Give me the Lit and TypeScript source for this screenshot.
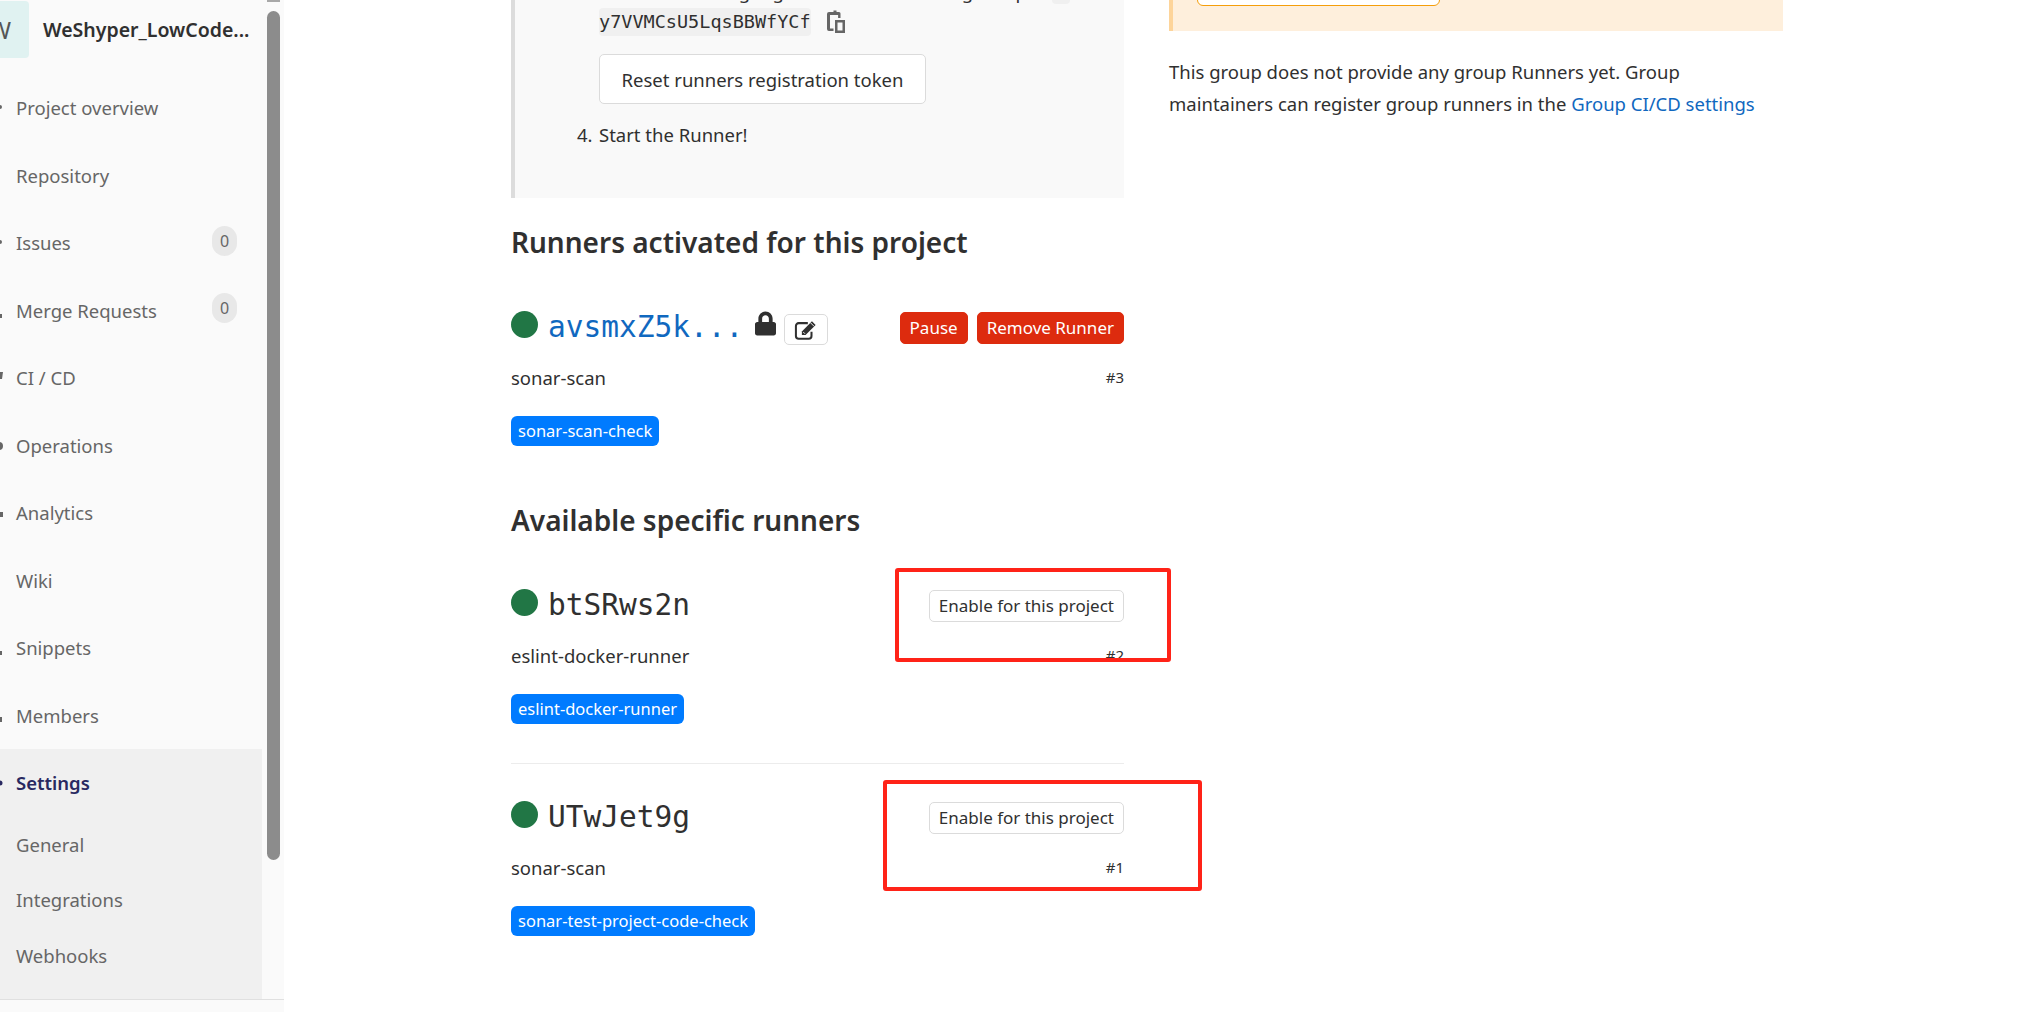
import { LitElement, html, css, svg } from "lit";
import { customElement } from "lit/decorators.js";

// --- Data ---

interface NavItem {
  label: string;
  count?: number;
  // sliver of the icon that is left visible at the clipped sidebar edge
  sliver: ReturnType<typeof svg>;
}

const NAV_ITEMS: NavItem[] = [
  { label: "Project overview", sliver: svg`<circle cx="0" cy="8" r="2" />` },
  { label: "Repository", sliver: svg`` },
  { label: "Issues", count: 0, sliver: svg`<circle cx="0" cy="8" r="2" />` },
  { label: "Merge Requests", count: 0, sliver: svg`<rect x="0" y="13" width="2" height="4" />` },
  { label: "CI / CD", sliver: svg`<path d="M0 3h3l-1 7H0z" />` },
  { label: "Operations", sliver: svg`<circle cx="-1" cy="10" r="4" />` },
  { label: "Analytics", sliver: svg`<path d="M0 8h3v5H0z" />` },
  { label: "Wiki", sliver: svg`` },
  { label: "Snippets", sliver: svg`<rect x="0" y="12" width="2" height="4" />` },
  { label: "Members", sliver: svg`<rect x="0" y="11" width="2" height="5" />` },
];

const SUB_ITEMS = ["General", "Integrations", "Webhooks"];

// --- Icons ---

const LOCK_ICON = html`<svg class="lock" viewBox="0 0 448 512" aria-hidden="true">
  <path
    d="M400 224h-24v-72C376 68.2 307.8 0 224 0S72 68.2 72 152v72H48c-26.5 0-48 21.5-48 48v192c0 26.5 21.5 48 48 48h352c26.5 0 48-21.5 48-48V272c0-26.5-21.5-48-48-48zm-104 0H152v-72c0-39.7 32.3-72 72-72s72 32.3 72 72v72z"
  />
</svg>`;

const EDIT_ICON = html`<svg class="edit" viewBox="0 0 26 24" aria-hidden="true">
  <path
    d="M19 14v4.5a3 3 0 0 1-3 3H5a3 3 0 0 1-3-3V7.5a3 3 0 0 1 3-3h10"
    fill="none"
    stroke="currentColor"
    stroke-width="2.2"
  />
  <path d="M8.5 13.5 19.5 2.5l4 4-11 11H8.5z" fill="currentColor" />
  <path d="M18 4.2l3.8 3.8" stroke="#fff" stroke-width="1" />
  <path d="M10 14.2l1.9 1.9" stroke="#fff" stroke-width="1" />
</svg>`;

const COPY_ICON = html`<svg class="copy" viewBox="0 0 18 24" aria-hidden="true">
  <path d="M6.5 3V1.5h3V3h2.5a1.5 1.5 0 0 1 1.5 1.5V9h-2.4V6H3v13.5h3.5V22H2a2 2 0 0 1-2-2V5a2 2 0 0 1 2-2z" />
  <path d="M8 11h10v13H8zM10.5 13.5v8h5v-8z" fill-rule="evenodd" />
</svg>`;

// --- Sidebar ---

@customElement("app-sidebar")
export class AppSidebar extends LitElement {
  static styles = css`
    :host {
      display: flex;
      flex-direction: column;
      position: relative;
      flex: none;
      width: 284px;
      height: 1012px;
      background: #fafafa;
      font-family: "Noto Sans", sans-serif;
      font-size: 18.5px;
      color: #666;
      overflow: hidden;
    }
    .head {
      display: flex;
      align-items: flex-start;
      gap: 14px;
      height: 74px;
      padding-top: 1px;
      box-sizing: border-box;
    }
    .avatar {
      flex: none;
      width: 58px;
      height: 57px;
      margin-left: -29px;
      border-radius: 4px;
      background: #e0f2f1;
      color: #555;
      font-size: 24px;
      line-height: 57px;
      text-align: center;
    }
    .title {
      font-size: 19.5px;
      font-weight: 600;
      color: #303030;
      line-height: 58px;
      white-space: nowrap;
    }
    nav {
      width: 262px;
      height: 926px;
      display: flex;
      flex-direction: column;
    }
    .item {
      display: flex;
      align-items: center;
      height: 67.5px;
      flex: none;
      padding-right: 25px;
    }
    .sliver {
      flex: none;
      width: 16px;
      height: 18px;
      fill: #666;
    }
    .label {
      flex: 1;
    }
    .count {
      width: 25px;
      height: 30px;
      margin-top: -4px;
      border-radius: 13px;
      background: #e8e8e8;
      color: #666;
      font-size: 16px;
      line-height: 30px;
      text-align: center;
    }
    .active {
      flex: 1;
      background: #f0f0f0;
    }
    .active .item {
      color: #292961;
      font-weight: 600;
    }
    .active .sliver {
      fill: #292961;
    }
    .sub {
      display: flex;
      align-items: center;
      height: 55.5px;
      padding-left: 16px;
    }
    .foot {
      height: 12px;
      border-top: 1px solid #e0e0e0;
    }
    .thumb {
      position: absolute;
      left: 267px;
      top: 11px;
      width: 13px;
      height: 349px;
      height: 849px;
      border-radius: 7px;
      background: #8c8c8c;
    }
    .thumb-top {
      position: absolute;
      left: 267px;
      top: 0;
      width: 13px;
      height: 2px;
      background: #a8a8a8;
    }
  `;

  private renderSliver(item: NavItem) {
    return html`<svg class="sliver" viewBox="0 0 16 18" aria-hidden="true">${item.sliver}</svg>`;
  }

  render() {
    return html`
      <div class="head">
        <div class="avatar">W</div>
        <div class="title">WeShyper_LowCode...</div>
      </div>
      <nav>
        ${NAV_ITEMS.map(
          (item) => html`
            <div class="item">
              ${this.renderSliver(item)}
              <span class="label">${item.label}</span>
              ${item.count !== undefined ? html`<span class="count">${item.count}</span>` : ""}
            </div>
          `,
        )}
        <div class="active">
          <div class="item">
            <svg class="sliver" viewBox="0 0 16 18" aria-hidden="true"><circle cx="0" cy="9" r="2.5" /></svg>
            <span class="label">Settings</span>
          </div>
          ${SUB_ITEMS.map((label) => html`<div class="sub">${label}</div>`)}
        </div>
      </nav>
      <div class="foot"></div>
      <div class="thumb-top"></div>
      <div class="thumb"></div>
    `;
  }
}

// --- Runner card ---

@customElement("runner-card")
export class RunnerCard extends LitElement {
  static properties = {
    name: {},
    description: {},
    tag: {},
    runnerId: {},
    linked: { type: Boolean },
    mark: {},
    divided: { type: Boolean },
  };

  name = "";
  description = "";
  tag = "";
  runnerId = 0;
  linked = false;
  mark = "";
  divided = false;

  static styles = css`
    :host {
      display: block;
      position: relative;
      padding: 39px 0;
    }
    :host([divided]) {
      border-top: 1px solid #ececec;
      padding-top: 38px;
    }
    .top {
      display: flex;
      justify-content: space-between;
      align-items: flex-start;
      height: 32px;
    }
    .title {
      display: flex;
      align-items: flex-start;
      height: 32px;
    }
    .dot {
      flex: none;
      width: 27px;
      height: 27px;
      margin-top: -1px;
      border-radius: 50%;
      background: #217645;
    }
    .name {
      margin-left: 10px;
      font-family: "DejaVu Sans Mono", monospace;
      font-size: 29.5px;
      line-height: 30px;
      color: #303030;
    }
    .name.link {
      color: #1068bf;
    }
    .lock {
      width: 21px;
      height: 25px;
      margin: -1px 0 0 12px;
      fill: #303030;
    }
    .edit-btn {
      display: flex;
      align-items: center;
      justify-content: center;
      width: 44px;
      height: 31px;
      margin: 2px 0 0 8px;
      box-sizing: border-box;
      border: 1px solid #dbdbdb;
      border-radius: 5px;
      background: #fff;
      color: #303030;
    }
    .edit {
      width: 26px;
      height: 22px;
    }
    .actions {
      display: flex;
      gap: 9px;
    }
    button {
      height: 32px;
      padding: 0 9px;
      box-sizing: border-box;
      border: 1px solid #dbdbdb;
      border-radius: 5px;
      background: #fff;
      color: #303030;
      font-family: "Noto Sans", sans-serif;
      font-size: 17px;
      line-height: 28px;
      white-space: nowrap;
    }
    button.danger {
      border-color: #dd2b0e;
      background: #dd2b0e;
      color: #fff;
    }
    .info {
      display: flex;
      justify-content: space-between;
      align-items: center;
      height: 28px;
      margin-top: 19px;
    }
    .id {
      font-size: 15px;
    }
    .tag {
      display: inline-block;
      height: 30px;
      margin-top: 25px;
      padding: 0 7px;
      border-radius: 6px;
      background: #007bff;
      color: #fff;
      font-size: 16.5px;
      line-height: 30px;
      vertical-align: top;
    }
    .mark {
      position: absolute;
      box-sizing: border-box;
      border: 4px solid #ff2318;
      border-radius: 3px;
    }
    .mark-a {
      left: 384px;
      top: 17px;
      width: 276px;
      height: 94px;
    }
    .mark-b {
      left: 372px;
      top: 16px;
      width: 319px;
      height: 111px;
    }
  `;

  render() {
    return html`
      <div class="top">
        <div class="title">
          <span class="dot"></span>
          <span class="name ${this.linked ? "link" : ""}">${this.name}</span>
          ${this.linked ? html`${LOCK_ICON}<span class="edit-btn">${EDIT_ICON}</span>` : ""}
        </div>
        <div class="actions">
          ${this.linked
            ? html`<button class="danger">Pause</button><button class="danger">Remove Runner</button>`
            : html`<button>Enable for this project</button>`}
        </div>
      </div>
      <div class="info">
        <span>${this.description}</span>
        <span class="id">#${this.runnerId}</span>
      </div>
      <span class="tag">${this.tag}</span>
      ${this.mark ? html`<div class="mark mark-${this.mark}"></div>` : ""}
    `;
  }
}

// --- Page ---

@customElement("app-root")
export class AppRoot extends LitElement {
  static styles = css`
    :host {
      display: flex;
      width: 2023px;
      height: 1012px;
      overflow: hidden;
      background: #fff;
      color: #303030;
      font-family: "Noto Sans", sans-serif;
      font-size: 18.5px;
    }
    main {
      display: flex;
      gap: 45px;
      align-items: flex-start;
      padding-left: 227px;
    }
    .left {
      width: 613px;
      flex: none;
      margin-top: -24px;
    }
    .right {
      width: 614px;
      flex: none;
      margin-top: -24px;
    }
    .steps {
      height: 222px;
      box-sizing: border-box;
      border-left: 4px solid #dcdcdc;
      background: #f9f9f9;
      padding-left: 84px;
    }
    .line {
      height: 32px;
      line-height: 32px;
      white-space: nowrap;
    }
    .chip-empty {
      display: inline-block;
      width: 18px;
      height: 28px;
      vertical-align: top;
      margin-left: 20px;
      border-radius: 4px;
      background: #f0f0f0;
    }
    .token {
      display: flex;
      align-items: flex-start;
      height: 46px;
    }
    code {
      height: 28px;
      padding: 0 0;
      border-radius: 4px;
      background: #f0f0f0;
      font-family: "DejaVu Sans Mono", monospace;
      font-size: 18.5px;
      line-height: 28px;
    }
    .copy {
      width: 18px;
      height: 24px;
      margin: 1px 0 0 16px;
      fill: #666;
    }
    .reset {
      display: block;
      width: 327px;
      height: 50px;
      box-sizing: border-box;
      border: 1px solid #dbdbdb;
      border-radius: 5px;
      background: #fff;
      color: #303030;
      font: inherit;
      padding: 0;
    }
    .start {
      position: relative;
      margin-top: 15px;
    }
    .num {
      display: inline-block;
      width: 22px;
      margin-left: -22px;
    }
    h3 {
      margin: 24px 0 11px;
      font-size: 28px;
      font-weight: 600;
      line-height: 40px;
    }
    h3.next {
      margin-top: 15px;
    }
    .alert {
      height: 55px;
      box-sizing: border-box;
      border-left: 4px solid #fdd49a;
      background: #feefdc;
      padding-left: 24px;
    }
    .alert-btn {
      width: 243px;
      height: 30px;
      box-sizing: border-box;
      border: 1px solid #f59e0b;
      border-radius: 6px;
      background: #fff;
    }
    .right p {
      margin: 25px 0 0;
      line-height: 31.5px;
    }
    a {
      color: #1068bf;
      text-decoration: none;
    }
  `;

  render() {
    return html`
      <app-sidebar></app-sidebar>
      <main>
        <div class="left">
          <div class="steps">
            <div class="line">Use the following registration token during setup:<span class="chip-empty"></span></div>
            <div class="token"><code>y7VVMCsU5LqsBBWfYCf</code>${COPY_ICON}</div>
            <button class="reset">Reset runners registration token</button>
            <div class="line start"><span class="num">4.</span>Start the Runner!</div>
          </div>
          <h3>Runners activated for this project</h3>
          <runner-card name="avsmxZ5k..." description="sonar-scan" tag="sonar-scan-check" runnerId="3" linked></runner-card>
          <h3 class="next">Available specific runners</h3>
          <runner-card name="btSRws2n" description="eslint-docker-runner" tag="eslint-docker-runner" runnerId="2" mark="a"></runner-card>
          <runner-card name="UTwJet9g" description="sonar-scan" tag="sonar-test-project-code-check" runnerId="1" mark="b" divided></runner-card>
        </div>
        <div class="right">
          <div class="alert"><div class="alert-btn"></div></div>
          <p>
            This group does not provide any group Runners yet. Group maintainers can register group runners in the
            <a href="#">Group CI/CD settings</a>
          </p>
        </div>
      </main>
    `;
  }
}
